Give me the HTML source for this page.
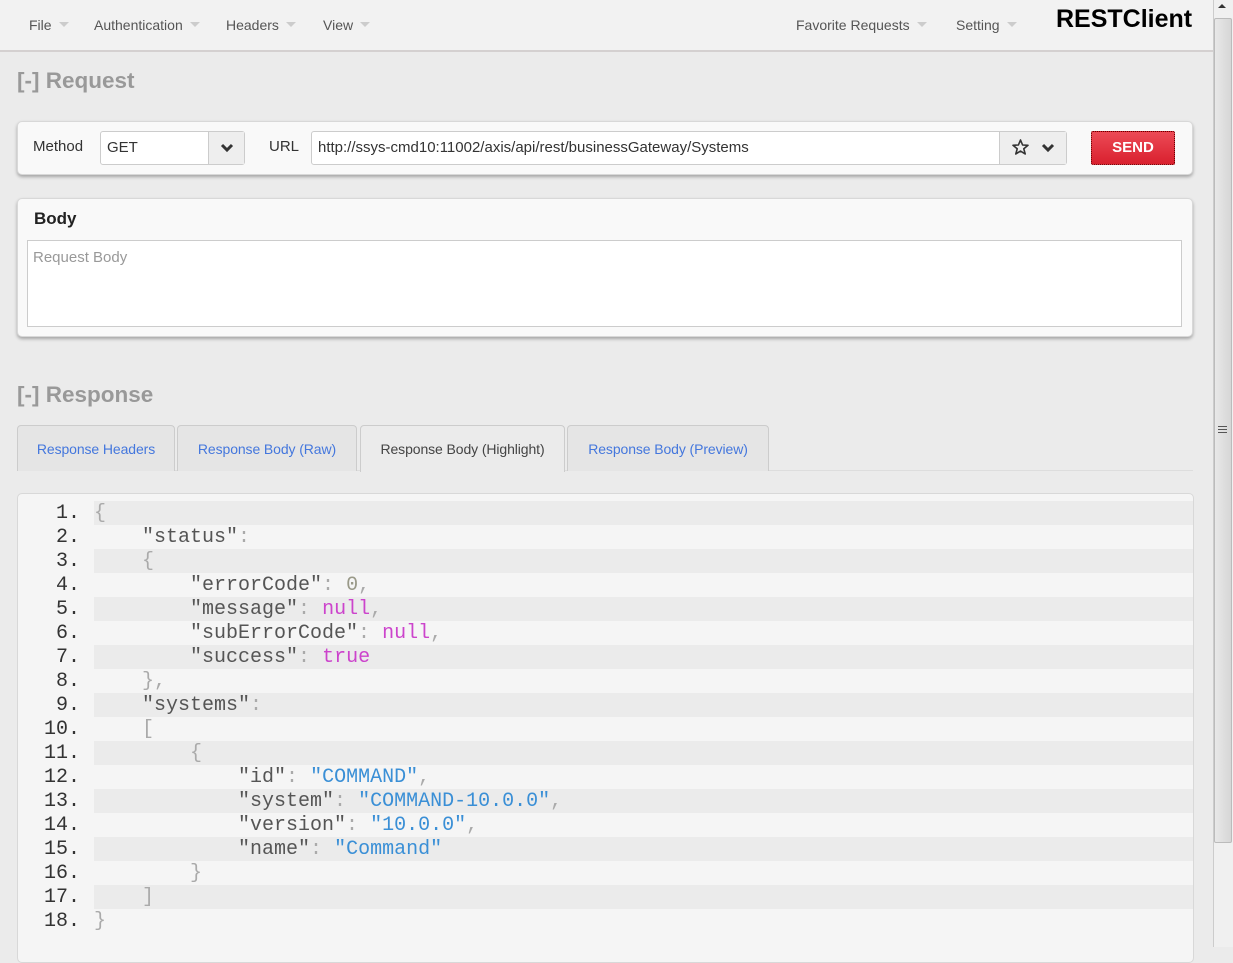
<!DOCTYPE html>
<html><head><meta charset="utf-8"><style>
*{box-sizing:border-box;margin:0;padding:0}
body{width:1233px;height:947px;overflow:hidden;background:#ebebeb;font-family:"Liberation Sans",sans-serif;position:relative}
.a{position:absolute}
.nav{left:0;top:0;width:1213px;height:52px;background:#f2f2f2;border-bottom:2px solid #d4d0d0}
.ni{top:17px;font-size:14px;color:#555}
.caret{display:inline-block;width:0;height:0;border-left:5px solid transparent;border-right:5px solid transparent;border-top:5px solid #ccc;margin-left:7px;vertical-align:3px}
.h{font-size:22.5px;font-weight:bold;color:#999}
.panel{background:#f9f9f9;border:1px solid #d8d8d8;border-radius:5px;box-shadow:0 2px 3px rgba(0,0,0,.3)}
.inp{background:#fff;border:1px solid #ccc;font-size:15px;color:#333;padding:7px 6px}
.tab{top:425px;height:46px;border:1px solid #ccc;border-bottom:none;border-radius:4px 4px 0 0;background:#e5e5e5;color:#4477dd;font-size:14px;padding-top:15px;text-align:center;letter-spacing:-0.1px}
.code{left:17px;top:493px;width:1177px;height:470px;background:#f5f5f5;border:1px solid #d8d8d8;border-radius:5px;overflow:hidden}
.ln{position:absolute;left:0;width:1176px;height:24px;font-family:"Liberation Mono","Courier New",monospace;font-size:20px;line-height:25px;color:#555}
.ln .n{position:absolute;right:1114px;color:#333}
.ln .c{position:absolute;left:76px;right:0;top:0;height:24px;white-space:pre;color:#555}
.ln.o .c{background:#ebebeb}
.p{color:#aaa}.s{color:#3a8fd6}.k{color:#c4c}.num{color:#998}
</style></head><body>
<div class="a nav"></div>
<div class="a ni" style="left:29px">File<span class="caret"></span></div>
<div class="a ni" style="left:94px">Authentication<span class="caret"></span></div>
<div class="a ni" style="left:226px">Headers<span class="caret"></span></div>
<div class="a ni" style="left:323px">View<span class="caret"></span></div>
<div class="a ni" style="left:796px">Favorite Requests<span class="caret"></span></div>
<div class="a ni" style="left:956px">Setting<span class="caret"></span></div>
<div class="a" style="left:1056px;top:5px;font-size:25px;font-weight:bold;color:#000">RESTClient</div>
<!-- scrollbar -->
<div class="a" style="left:1213px;top:0;width:20px;height:947px;background:#f0f0f0;border-left:1px solid #ccc"></div>
<div class="a" style="left:1214px;top:18px;width:18px;height:825px;background:linear-gradient(90deg,#e8e8e8,#d6d6d6);border:1px solid #bbb;border-radius:2px"></div>
<div class="a" style="left:1218px;top:426px;width:9px;height:1px;background:#555;box-shadow:0 3px #555,0 6px #555"></div>
<div class="a" style="left:1218px;top:4px;width:0;height:0;border-left:4px solid transparent;border-right:4px solid transparent;border-bottom:4px solid #333"></div>

<div class="a h" style="left:17px;top:68px">[-] Request</div>
<div class="a panel" style="left:17px;top:121px;width:1176px;height:54px"></div>
<div class="a" style="left:33px;top:138px;font-size:15px;color:#333">Method</div>
<div class="a inp" style="left:100px;top:131px;width:145px;height:34px;border-radius:3px">GET</div>
<div class="a" style="left:208px;top:132px;width:36px;height:32px;background:#eee;border-left:1px solid #ccc"></div>
<svg class="a" style="left:220px;top:142px" width="14" height="12" viewBox="0 0 14 12"><path d="M2 3 L7 8 L12 3" stroke="#333" stroke-width="3" fill="none"/></svg>
<div class="a" style="left:269px;top:138px;font-size:15px;color:#333">URL</div>
<div class="a inp" style="left:311px;top:131px;width:756px;height:34px;border-radius:3px">http://ssys-cmd10:11002/axis/api/rest/businessGateway/Systems</div>
<div class="a" style="left:999px;top:132px;width:67px;height:32px;background:#eee;border-left:1px solid #ccc"></div>
<svg class="a" style="left:1012px;top:139px" width="17" height="16" viewBox="0 0 17 16"><path d="M8.5 1 L10.6 6 L16 6.3 L11.8 9.8 L13.2 15 L8.5 12.1 L3.8 15 L5.2 9.8 L1 6.3 L6.4 6 Z" stroke="#333" stroke-width="1.6" fill="none" stroke-linejoin="round"/></svg>
<svg class="a" style="left:1041px;top:142px" width="14" height="12" viewBox="0 0 14 12"><path d="M2 3 L7 8 L12 3" stroke="#333" stroke-width="3" fill="none"/></svg>
<div class="a" style="left:1091px;top:131px;width:84px;height:34px;background:linear-gradient(#ec4a56,#d9202e);border:1px dotted #600;border-radius:2px;color:#fff;font-weight:bold;font-size:15px;text-align:center;line-height:32px">SEND</div>

<div class="a panel" style="left:17px;top:198px;width:1176px;height:139px"></div>
<div class="a" style="left:34px;top:209px;font-size:17px;font-weight:bold;color:#222">Body</div>
<div class="a" style="left:27px;top:240px;width:1155px;height:87px;background:#fff;border:1px solid #ccc"></div>
<div class="a" style="left:33px;top:249px;font-size:15px;color:#999">Request Body</div>

<div class="a h" style="left:17px;top:382px">[-] Response</div>
<div class="a" style="left:17px;top:470px;width:1176px;height:1px;background:#ddd"></div>
<div class="a tab" style="left:17px;width:158px">Response Headers</div>
<div class="a tab" style="left:177px;width:180px">Response Body (Raw)</div>
<div class="a tab" style="left:360px;width:205px;background:#ebebeb;color:#444;height:47px">Response Body (Highlight)</div>
<div class="a tab" style="left:567px;width:202px">Response Body (Preview)</div>

<div class="a code">
<div class="ln o" style="top:7px"><span class="n">1.</span><span class="c"><span class="p">{</span></span></div>
<div class="ln" style="top:31px"><span class="n">2.</span><span class="c">    "status"<span class="p">:</span></span></div>
<div class="ln o" style="top:55px"><span class="n">3.</span><span class="c">    <span class="p">{</span></span></div>
<div class="ln" style="top:79px"><span class="n">4.</span><span class="c">        "errorCode"<span class="p">:</span> <span class="num">0</span><span class="p">,</span></span></div>
<div class="ln o" style="top:103px"><span class="n">5.</span><span class="c">        "message"<span class="p">:</span> <span class="k">null</span><span class="p">,</span></span></div>
<div class="ln" style="top:127px"><span class="n">6.</span><span class="c">        "subErrorCode"<span class="p">:</span> <span class="k">null</span><span class="p">,</span></span></div>
<div class="ln o" style="top:151px"><span class="n">7.</span><span class="c">        "success"<span class="p">:</span> <span class="k">true</span></span></div>
<div class="ln" style="top:175px"><span class="n">8.</span><span class="c">    <span class="p">},</span></span></div>
<div class="ln o" style="top:199px"><span class="n">9.</span><span class="c">    "systems"<span class="p">:</span></span></div>
<div class="ln" style="top:223px"><span class="n">10.</span><span class="c">    <span class="p">[</span></span></div>
<div class="ln o" style="top:247px"><span class="n">11.</span><span class="c">        <span class="p">{</span></span></div>
<div class="ln" style="top:271px"><span class="n">12.</span><span class="c">            "id"<span class="p">:</span> <span class="s">"COMMAND"</span><span class="p">,</span></span></div>
<div class="ln o" style="top:295px"><span class="n">13.</span><span class="c">            "system"<span class="p">:</span> <span class="s">"COMMAND-10.0.0"</span><span class="p">,</span></span></div>
<div class="ln" style="top:319px"><span class="n">14.</span><span class="c">            "version"<span class="p">:</span> <span class="s">"10.0.0"</span><span class="p">,</span></span></div>
<div class="ln o" style="top:343px"><span class="n">15.</span><span class="c">            "name"<span class="p">:</span> <span class="s">"Command"</span></span></div>
<div class="ln" style="top:367px"><span class="n">16.</span><span class="c">        <span class="p">}</span></span></div>
<div class="ln o" style="top:391px"><span class="n">17.</span><span class="c">    <span class="p">]</span></span></div>
<div class="ln" style="top:415px"><span class="n">18.</span><span class="c"><span class="p">}</span></span></div>
</div>
</body></html>
